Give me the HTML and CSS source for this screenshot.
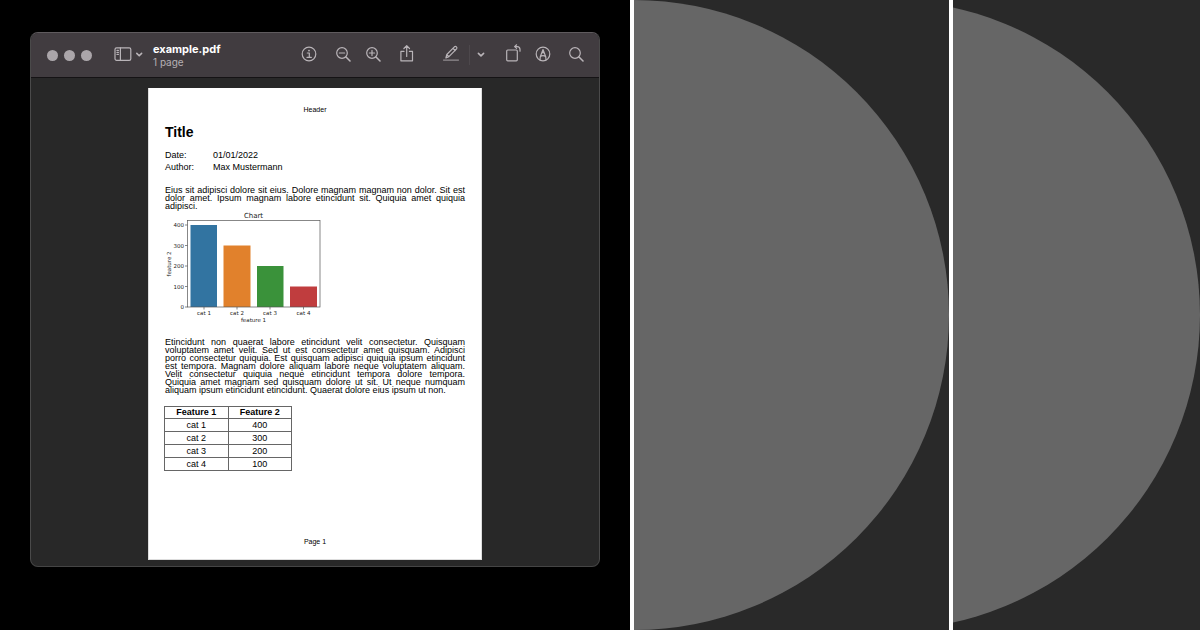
FILE: index.html
```html
<!DOCTYPE html>
<html lang="en">
<head>
<meta charset="utf-8">
<meta name="viewport" content="width=device-width, initial-scale=1">
<title>example.pdf</title>
<link rel="stylesheet" href="styles.css">
</head>
<body>
<main class="gallery">
  <section class="desktop">
    <article class="window">
      <header class="toolbar">
        <div class="lights">
          <button class="light" type="button" aria-label="Close"></button>
          <button class="light" type="button" aria-label="Minimize"></button>
          <button class="light" type="button" aria-label="Zoom window"></button>
        </div>
        <button class="tool sidebar" type="button" aria-label="Sidebar">
          <svg width="30" height="24" viewBox="0 0 30 24"><rect x="2" y="5.8" width="15.800" height="12.600" rx="1.6"/><path d="M7.400 5.800v12.600M4 8.400h1.400M4 10.400h1.400M4 12.400h1.400"/><path class="bold" d="M23.800 11.400l2.400 2.400 2.400-2.400"/></svg>
        </button>
        <div class="heading">
          <h1 class="filename">example.pdf</h1>
          <p class="count">1 page</p>
        </div>
        <div class="tools">
          <button class="tool" type="button" aria-label="Info">
            <svg width="24" height="24" viewBox="0 0 24 24"><circle cx="12" cy="12" r="6.800"/><path d="M10.300 11h2v4.300M10 15.400h4.300"/><circle class="solid" cx="12" cy="8.600" r="0.9"/></svg>
          </button>
          <button class="tool gap-m" type="button" aria-label="Zoom out">
            <svg width="24" height="24" viewBox="0 0 24 24"><circle cx="11" cy="11" r="5.300"/><path d="M8.400 11h5.200"/><path class="bold" d="M15 15l4 4"/></svg>
          </button>
          <button class="tool gap-s" type="button" aria-label="Zoom in">
            <svg width="24" height="24" viewBox="0 0 24 24"><circle cx="11" cy="11" r="5.300"/><path d="M8.400 11h5.200M11 8.400v5.200"/><path class="bold" d="M15 15l4 4"/></svg>
          </button>
          <button class="tool gap-m" type="button" aria-label="Share">
            <svg width="24" height="24" viewBox="0 0 24 24"><path d="M9 9.400H5.900v9.400h11.600V9.400h-3.100M11.700 14.500V3.800M8.900 6.500l2.800-2.800 2.800 2.800"/></svg>
          </button>
          <button class="tool gap-l" type="button" aria-label="Highlight">
            <svg width="24" height="24" viewBox="0 0 24 24"><path d="M6.900 15.900l.9-3.400 7.600-7.700c1.500-1.100 3.200.5 2.200 2.100L9.900 14.600zM14 6.300l2.200 2.200M7.900 12.600l2 2"/><path class="faint" d="M4.500 18.100h15"/></svg>
          </button>
          <span class="divider"></span>
          <button class="tool narrow" type="button" aria-label="Highlight options">
            <svg width="12" height="24" viewBox="0 0 12 24"><path class="bold" d="M3.400 11.400L6 13.900l2.600-2.500"/></svg>
          </button>
          <button class="tool gap-r" type="button" aria-label="Rotate">
            <svg width="24" height="24" viewBox="0 0 24 24"><rect x="5.700" y="8" width="10.600" height="10.800" rx="1"/><path d="M14 4.600h2.200c1.700 0 2.800 1.200 2.800 3v1.600M15.600 2.800l-2 1.800 2 1.800"/></svg>
          </button>
          <button class="tool gap-s" type="button" aria-label="Markup">
            <svg width="24" height="24" viewBox="0 0 24 24"><circle cx="12" cy="12" r="6.800"/><path d="M9 17.800l.3-3.200L12 7.500l2.700 7.100.3 3.200M9.300 14.600c1.500-1 3.900-1 5.400 0M12 8v3"/></svg>
          </button>
          <button class="tool gap-m" type="button" aria-label="Search">
            <svg width="24" height="24" viewBox="0 0 24 24"><circle cx="10" cy="11" r="5.300"/><path class="bold" d="M14 15l4 4"/></svg>
          </button>
        </div>
      </header>
      <div class="canvas">
        <div class="page">
          <p class="running">Header</p>
          <h2 class="title">Title</h2>
          <dl class="meta">
            <dt>Date:</dt><dd>01/01/2022</dd>
            <dt>Author:</dt><dd>Max Mustermann</dd>
          </dl>
          <p class="prose">Eius sit adipisci dolore sit eius. Dolore magnam magnam non dolor. Sit est dolor amet. Ipsum magnam labore etincidunt sit. Quiquia amet quiquia adipisci.</p>
          <svg class="chart" viewBox="0 0 340 256" role="img" aria-label="Chart">
            <g class="bars">
              <path fill="#3274a1" d="M51 30h53v164H51z"/>
              <path fill="#e1812c" d="M117 71h54v123h-54z"/>
              <path fill="#3a923a" d="M184 112h53v82h-53z"/>
              <path fill="#c03d3e" d="M250 153h54v41h-54z"/>
            </g>
            <rect class="frame" x="45" y="21" width="265" height="173"/>
            <path class="frame" d="M40 30h5M40 71h5M40 112h5M40 153h5M40 194h5M78 194v5M144 194v5M210 194v5M277 194v5"/>
            <text class="chart-title" x="177" y="16">Chart</text>
            <g class="ticks-y">
              <text x="38" y="34">400</text><text x="38" y="75">300</text><text x="38" y="116">200</text><text x="38" y="157">100</text><text x="38" y="198">0</text>
            </g>
            <g class="ticks-x">
              <text x="78" y="209">cat 1</text><text x="144" y="209">cat 2</text><text x="210" y="209">cat 3</text><text x="277" y="209">cat 4</text>
            </g>
            <text class="axis" x="177" y="224">feature 1</text>
            <text class="axis" transform="translate(12 108) rotate(-90)">feature 2</text>
          </svg>
          <p class="prose">Etincidunt non quaerat labore etincidunt velit consectetur. Quisquam voluptatem amet velit. Sed ut est consectetur amet quisquam. Adipisci porro consectetur quiquia. Est quisquam adipisci quiquia ipsum etincidunt est tempora. Magnam dolore aliquam labore neque voluptatem aliquam. Velit consectetur quiquia neque etincidunt tempora dolore tempora. Quiquia amet magnam sed quisquam dolore ut sit. Ut neque numquam aliquam ipsum etincidunt etincidunt. Quaerat dolore eius ipsum ut non.</p>
          <table class="data">
            <thead><tr><th>Feature 1</th><th>Feature 2</th></tr></thead>
            <tbody>
              <tr><td>cat 1</td><td>400</td></tr>
              <tr><td>cat 2</td><td>300</td></tr>
              <tr><td>cat 3</td><td>200</td></tr>
              <tr><td>cat 4</td><td>100</td></tr>
            </tbody>
          </table>
          <p class="running footer">Page 1</p>
        </div>
      </div>
    </article>
  </section>
  <section class="panel">
    <svg class="disc" viewBox="0 0 630 630" preserveAspectRatio="xMaxYMid slice"><circle cx="315" cy="315" r="315"/></svg>
  </section>
  <section class="panel">
    <svg class="disc" viewBox="0 0 630 630" preserveAspectRatio="xMaxYMid slice"><circle cx="315" cy="315" r="315"/></svg>
  </section>
</main>
</body>
</html>
```

FILE: styles.css
```css
* {
  box-sizing: border-box;
}

body,
h1,
h2,
p,
dl,
dd {
  margin: 0;
}

.gallery {
  display: grid;
  grid-template-columns: 630fr 315fr 247fr;
  gap: 4px;
  min-height: 100vh;
  background: #fff;
}

.desktop {
  padding: 32px 30px;
  background: #000;
}

.window {
  border: 1px solid;
  border-color: #5f5b5e #4a4a4a #454545;
  border-radius: 8px;
  overflow: hidden;
  background: #282828;
}

.toolbar {
  display: flex;
  align-items: center;
  height: 45px;
  padding: 0 10px 0 16px;
  background: #413c40;
  border-bottom: 1px solid #151315;
  font-family: Inter, "Liberation Sans", sans-serif;
}

.lights {
  display: flex;
  gap: 6px;
}

.light {
  width: 11px;
  height: 11px;
  padding: 0;
  border: 0;
  border-radius: 50%;
  background: #aba6aa;
}

.tool {
  display: flex;
  padding: 0 0 2px;
  border: 0;
  background: none;
}

.tool svg {
  fill: none;
  stroke: #b9b4b8;
  stroke-width: 1.2;
  stroke-linecap: round;
  stroke-linejoin: round;
}

.tool .bold {
  stroke-width: 1.6;
}

.tool .faint {
  stroke: #918c90;
}

.tool .solid {
  fill: #b9b4b8;
  stroke: none;
}

.sidebar {
  margin-left: 21px;
}

.heading {
  margin-left: 10px;
}

.filename {
  font-size: 11px;
  line-height: 13px;
  font-weight: 700;
  color: #fff;
}

.count {
  font-size: 10px;
  line-height: 12px;
  color: #b5b0b4;
}

.tools {
  display: flex;
  align-items: center;
  margin-left: auto;
}

.gap-s {
  margin-left: 6px;
}

.gap-m {
  margin-left: 10px;
}

.gap-l {
  margin-left: 20px;
}

.gap-r {
  margin-left: 14px;
}

.divider {
  width: 1px;
  height: 20px;
  margin: 0 5px 0 6px;
  background: #4d484c;
}

.canvas {
  display: flex;
  justify-content: center;
  padding: 10px 16px 6px;
}

.page {
  display: flex;
  flex-direction: column;
  width: 100%;
  max-width: 334px;
  min-height: 472px;
  padding: 18px 16px 13px;
  border: 1px solid #ddd;
  border-top: 0;
  background: #fff;
  color: #000;
  font-family: "Liberation Sans", Arial, sans-serif;
  font-size: 9px;
}

.running {
  font-size: 7px;
  line-height: 8px;
  text-align: center;
}

.title {
  margin-top: 10px;
  font-size: 14px;
  line-height: 16px;
}

.meta {
  display: grid;
  grid-template-columns: 48px 1fr;
  margin-top: 9px;
  line-height: 12px;
}

.prose {
  margin-top: 13px;
  line-height: 8px;
  text-align: justify;
}

.chart {
  display: block;
  width: 170px;
  font-family: "DejaVu Sans", sans-serif;
  font-size: 11px;
  fill: #222;
}

.chart + .prose {
  margin-top: 0;
}

.chart .frame {
  fill: none;
  stroke: #555;
  stroke-width: 1.4;
}

.chart-title {
  font-size: 14px;
  text-anchor: middle;
}

.axis {
  text-anchor: middle;
}

.ticks-x {
  text-anchor: middle;
}

.ticks-y {
  text-anchor: end;
}

.data {
  width: 128px;
  height: 65px;
  margin: 12px 0 0 -1px;
  border-collapse: collapse;
  line-height: 11px;
  text-align: center;
}

.data th,
.data td {
  width: 50%;
  padding: 0;
  border: 1px solid #666;
}

.footer {
  margin-top: auto;
}

.panel {
  position: relative;
  background: #292929;
}

.disc {
  position: absolute;
  inset: 0;
  width: 100%;
  height: 100%;
  fill: #666;
}
```
